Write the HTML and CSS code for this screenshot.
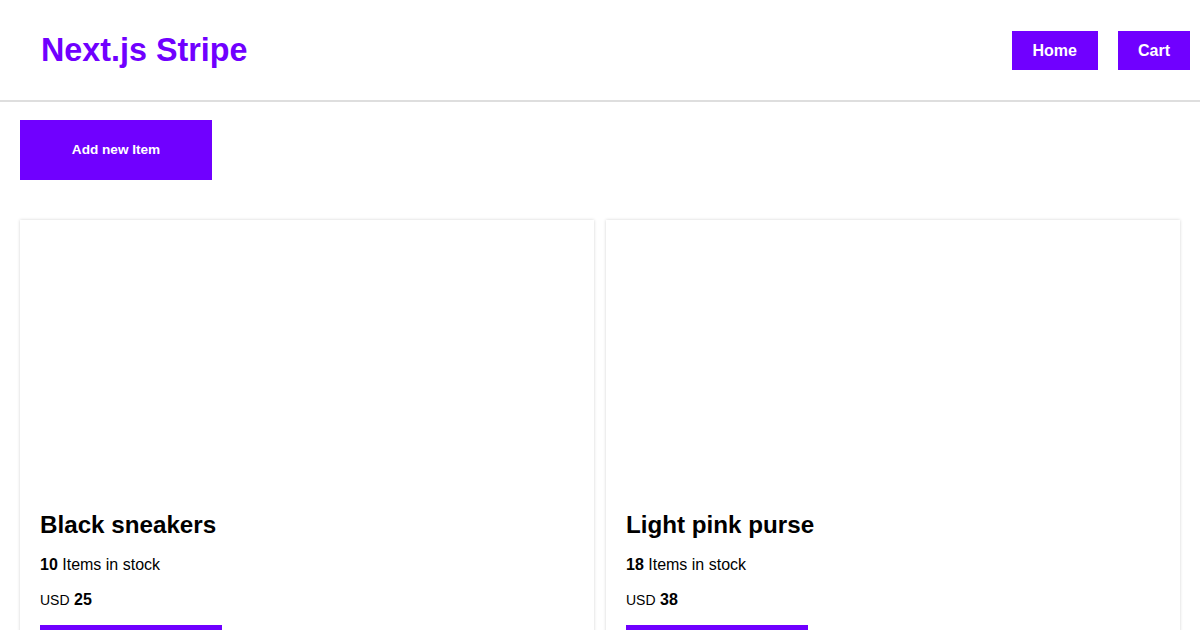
FILE: index.html
```html
<!DOCTYPE html>
<html>
<head>
<meta charset="utf-8">
<title>Next.js Stripe</title>
<link rel="stylesheet" href="styles.css">
</head>
<body>
<header class="header">
  <h1 class="logo">Next.js Stripe</h1>
  <nav class="nav">
    <a class="nav-btn nav-home" href="#">Home</a>
    <a class="nav-btn nav-cart" href="#">Cart</a>
  </nav>
</header>
<main class="main">
  <button class="add-btn">Add new Item</button>
  <section class="grid">
    <article class="card">
      <div class="card-img"></div>
      <div class="card-body">
        <h2 class="card-title">Black sneakers</h2>
        <p class="stock"><b>10</b> Items in stock</p>
        <p class="price"><span class="cur">USD</span> <b>25</b></p>
        <button class="buy-btn">Add to cart</button>
      </div>
    </article>
    <article class="card">
      <div class="card-img"></div>
      <div class="card-body">
        <h2 class="card-title">Light pink purse</h2>
        <p class="stock"><b>18</b> Items in stock</p>
        <p class="price"><span class="cur">USD</span> <b>38</b></p>
        <button class="buy-btn">Add to cart</button>
      </div>
    </article>
  </section>
</main>
</body>
</html>
```

FILE: styles.css
```css
* { box-sizing: border-box; }
html, body { margin: 0; padding: 0; }
body {
  font-family: "Liberation Sans", Arial, sans-serif;
  color: #000;
  background: #fff;
}
.header {
  height: 102px;
  display: flex;
  align-items: center;
  justify-content: space-between;
  padding: 0 10px 0 41px;
  border-bottom: 2px solid #dedede;
}
.logo {
  margin: 0;
  font-size: 32.3px;
  font-weight: 700;
  color: #7000ff;
}
.nav {
  display: flex;
  gap: 20px;
}
.nav-btn {
  display: block;
  background: #7000ff;
  color: #fff;
  text-decoration: none;
  font-weight: 700;
  font-size: 16px;
  line-height: 19px;
  padding: 10px 20px;
}
.nav-home { padding: 10px 21px; }
.main {
  padding: 18px 20px 20px;
}
.add-btn {
  display: block;
  width: 192px;
  height: 60px;
  padding: 0 0 2px;
  border: none;
  background: #7000ff;
  color: #fff;
  font-family: inherit;
  font-weight: 700;
  font-size: 13.6px;
}
.grid {
  margin-top: 40px;
  display: grid;
  grid-template-columns: 1fr 1fr;
  gap: 12px;
}
.card {
  box-shadow: 0 0 3px rgba(0,0,0,0.18);
  background: #fff;
}
.card-img {
  height: 271px;
}
.card-body {
  padding: 20px 20px 0;
}
.card-title {
  margin: 0;
  font-size: 24.2px;
  line-height: 28px;
  font-weight: 700;
}
.stock {
  margin: 17px 0 0;
  font-size: 16px;
  line-height: 18px;
}
.price {
  margin: 17px 0 0;
  font-size: 16px;
  line-height: 18px;
}
.cur { font-size: 14px; }
.buy-btn {
  display: block;
  margin-top: 16px;
  width: 182px;
  height: 40px;
  padding: 0;
  border: none;
  background: #7000ff;
  color: #fff;
  font-family: inherit;
  font-weight: 700;
  font-size: 13.6px;
  line-height: 40px;
}
```
